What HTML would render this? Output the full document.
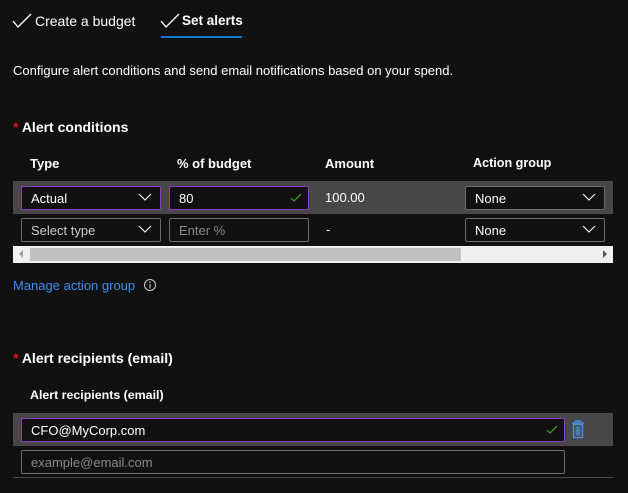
<!DOCTYPE html>
<html><head><meta charset="utf-8"><style>
*{box-sizing:border-box;margin:0;padding:0}
body{width:628px;height:493px;background:#111111;color:#fff;font-family:"Liberation Sans",sans-serif;font-size:13px;position:relative;overflow:hidden}
.a{position:absolute;white-space:nowrap}
.b{font-weight:bold}
.box{position:absolute;height:24px;border:1px solid #6b6b6b;background:#111;border-radius:2px}
.p{border-color:#8f39c6}
.t{position:absolute;left:9px;top:4px;font-size:13px}
.chev{position:absolute;right:8px;top:5px}
.ph{color:#8a8a8a}
.chk{position:absolute;right:6px;top:6px}
</style></head><body>
<svg class="a" style="left:12px;top:13px" width="20" height="16"><path d="M1 8 L6 14 L19 1" stroke="#fff" stroke-width="1.3" fill="none"/></svg>
<div class="a" style="left:35px;top:13px;font-size:14px">Create a budget</div>
<svg class="a" style="left:160px;top:13px" width="20" height="16"><path d="M1 8 L6 14 L19 1" stroke="#fff" stroke-width="1.3" fill="none"/></svg>
<div class="a b" style="left:182px;top:13px;font-size:13.5px">Set alerts</div>
<div class="a" style="left:161px;top:36px;width:81px;height:2px;background:#0f78d4"></div>
<div class="a" style="left:13px;top:63px">Configure alert conditions and send email notifications based on your spend.</div>
<div class="a b" style="left:13px;top:119px;font-size:14px"><span style="color:#e81123">*</span> Alert conditions</div>
<div class="a b" style="left:30px;top:156px">Type</div>
<div class="a b" style="left:177px;top:156px">% of budget</div>
<div class="a b" style="left:325px;top:156px">Amount</div>
<div class="a b" style="left:473px;top:156px;font-size:12.6px">Action group</div>
<div class="a" style="left:13px;top:181px;width:600px;height:33px;background:#474747"></div>
<div class="box p" style="left:21px;top:186px;width:140px"><span class="t">Actual</span><svg class="chev" width="14" height="10"><path d="M1 2 L7 8 L13 2" stroke="#fff" stroke-width="1.1" fill="none"/></svg></div>
<div class="box p" style="left:169px;top:186px;width:140px"><span class="t">80</span><svg class="chk" width="12" height="10"><path d="M1 5 L4 8 L11 1" stroke="#4ea52a" stroke-width="1.2" fill="none"/></svg></div>
<div class="a" style="left:325px;top:190px">100.00</div>
<div class="box" style="left:465px;top:186px;width:140px"><span class="t">None</span><svg class="chev" width="14" height="10"><path d="M1 2 L7 8 L13 2" stroke="#fff" stroke-width="1.1" fill="none"/></svg></div>
<div class="box" style="left:21px;top:218px;width:140px"><span class="t" style="color:#ccc">Select type</span><svg class="chev" width="14" height="10"><path d="M1 2 L7 8 L13 2" stroke="#fff" stroke-width="1.1" fill="none"/></svg></div>
<div class="box" style="left:169px;top:218px;width:140px"><span class="t ph">Enter %</span></div>
<div class="a" style="left:326px;top:222px">-</div>
<div class="box" style="left:465px;top:218px;width:140px"><span class="t">None</span><svg class="chev" width="14" height="10"><path d="M1 2 L7 8 L13 2" stroke="#fff" stroke-width="1.1" fill="none"/></svg></div>
<div class="a" style="left:13px;top:246px;width:600px;height:17px;background:#f0f0f0"></div>
<div class="a" style="left:30px;top:248px;width:431px;height:13px;background:#c1c1c1"></div>
<svg class="a" style="left:18px;top:250px" width="6" height="8"><path d="M5 0 L1 4 L5 8Z" fill="#a0a0a0"/></svg>
<svg class="a" style="left:602px;top:250px" width="6" height="8"><path d="M1 0 L5 4 L1 8Z" fill="#555"/></svg>
<div class="a" style="left:13px;top:278px;color:#3c91f0">Manage action group</div>
<svg class="a" style="left:143px;top:278px" width="14" height="14"><circle cx="7" cy="7" r="5.5" stroke="#ccc" fill="none"/><path d="M7 6 V10.5" stroke="#ccc"/><circle cx="7" cy="4.2" r=".7" fill="#ccc"/></svg>
<div class="a b" style="left:13px;top:350px;font-size:14px"><span style="color:#e81123">*</span> Alert recipients (email)</div>
<div class="a b" style="left:30px;top:388px;font-size:12.4px">Alert recipients (email)</div>
<div class="a" style="left:13px;top:413px;width:600px;height:33px;background:#474747"></div>
<div class="box p" style="left:21px;top:418px;width:544px"><span class="t">CFO@MyCorp.com</span><svg class="chk" width="12" height="10"><path d="M1 5 L4 8 L11 1" stroke="#4ea52a" stroke-width="1.2" fill="none"/></svg></div>
<svg class="a" style="left:571px;top:419px" width="14" height="20"><path d="M4 2 H10 M1 4 H13" stroke="#4a8fe0" stroke-width="1.5"/><rect x="2.5" y="5.5" width="9" height="13" stroke="#4a8fe0" stroke-width="1.3" fill="none"/><rect x="4.5" y="7.5" width="5" height="9" fill="#4a8fe0" opacity=".7"/></svg>
<div class="box" style="left:21px;top:450px;width:544px"><span class="t ph">example@email.com</span></div>
<div class="a" style="left:13px;top:477px;width:600px;height:1px;background:#4a4a4a"></div>
</body></html>
